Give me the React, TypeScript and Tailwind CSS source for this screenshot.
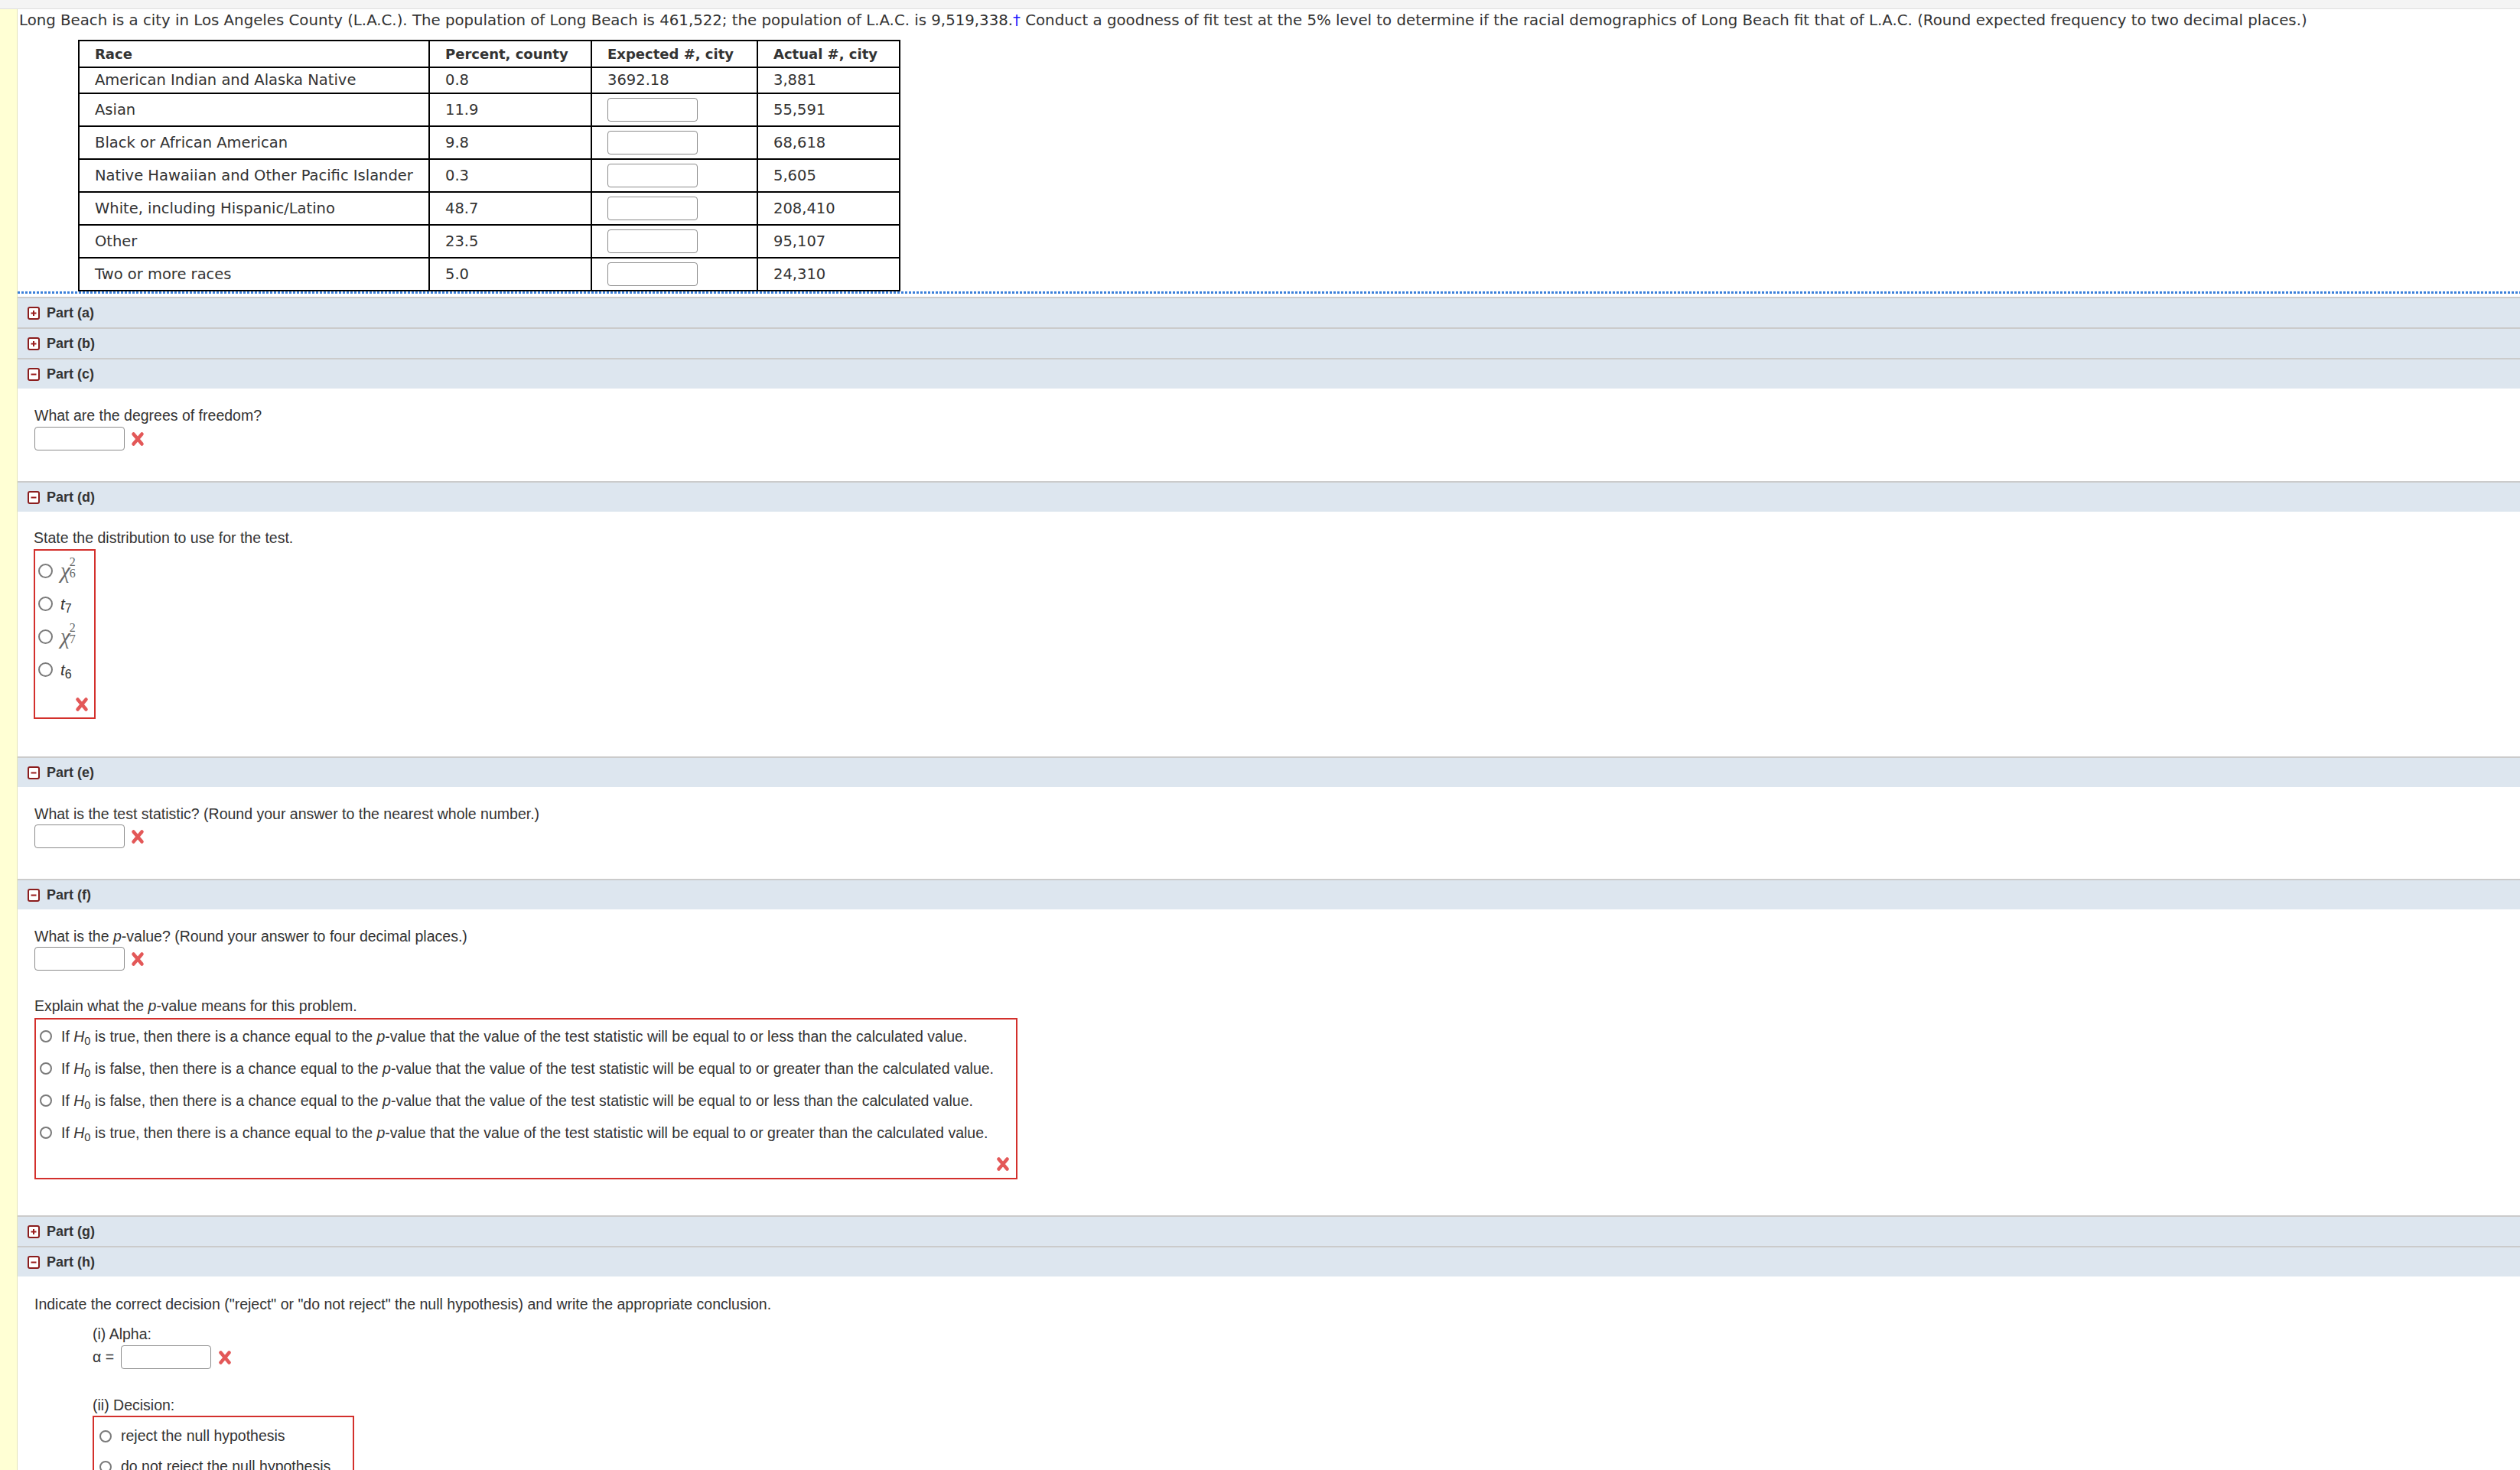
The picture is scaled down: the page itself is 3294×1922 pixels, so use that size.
import React from "react";

const verdana = "font-['DejaVu_Sans',Verdana,sans-serif]";
const arial = "font-['Liberation_Sans',Arial,sans-serif]";

const rows: [string, string, string | null, string][] = [
  ["American Indian and Alaska Native", "0.8", "3692.18", "3,881"],
  ["Asian", "11.9", null, "55,591"],
  ["Black or African American", "9.8", null, "68,618"],
  ["Native Hawaiian and Other Pacific Islander", "0.3", null, "5,605"],
  ["White, including Hispanic/Latino", "48.7", null, "208,410"],
  ["Other", "23.5", null, "95,107"],
  ["Two or more races", "5.0", null, "24,310"],
];

const Toggle = ({ open }: { open: boolean }) => (
  <svg width="16" height="17" viewBox="0 0 16 17" className="shrink-0">
    <rect x="1" y="1" width="14" height="15" rx="2" fill="#fff" stroke="#8b1d1d" strokeWidth="2" />
    <path d="M4.5 8.5h7" stroke="#9b1c1c" strokeWidth="2" />
    {!open && <path d="M8 5v7" stroke="#9b1c1c" strokeWidth="2" />}
  </svg>
);

const Cross = () => (
  <svg width="20" height="20" viewBox="0 0 20 20" className="shrink-0">
    <path d="M4.5 3.5 15.5 16.5M15.5 3.5 4.5 16.5" stroke="#e35858" strokeWidth="4.5" strokeLinecap="round" />
  </svg>
);

const Radio = ({ big }: { big?: boolean }) =>
  big ? (
    <span className="w-[19px] h-[19px] rounded-full border-2 border-[#7a7a7a] bg-white shrink-0" />
  ) : (
    <span className="w-[16px] h-[16px] rounded-full border-2 border-[#7a7a7a] bg-white shrink-0" />
  );

const Box = () => (
  <input type="text" readOnly className="w-[118px] h-[31px] border border-[#8c8c8c] rounded-[4px] bg-white" />
);

const PartHeader = ({ label, open }: { label: string; open: boolean }) => (
  <div className="h-[40px] border-t-2 border-[#cbcbcb] bg-[#dde6ef] flex items-center pl-[13px] gap-[9px]">
    <Toggle open={open} />
    <span className={`${arial} font-bold text-[18px] text-[#333]`}>Part ({label})</span>
  </div>
);

const Chi = ({ n }: { n: string }) => (
  <span className="inline-flex items-center font-['Liberation_Serif',serif] text-[#666]">
    <span className="italic text-[29px] leading-none">χ</span>
    <span className="inline-flex flex-col text-[16px] leading-[15px] -ml-[1px] -mt-[10px]">
      <span>2</span>
      <span>{n}</span>
    </span>
  </span>
);

const T = ({ n }: { n: string }) => (
  <span className={`${arial} text-[21px] text-[#333]`}>
    <span className="italic">t</span>
    <sub className="text-[16px]">{n}</sub>
  </span>
);

const H0 = () => (
  <>
    <i>H</i>
    <sub>0</sub>
  </>
);

const pOptions = [
  ["true", "less"],
  ["false", "greater"],
  ["false", "less"],
  ["true", "greater"],
];

const th = "border-2 border-black px-[20px] text-left font-bold text-[18px] whitespace-nowrap";
const td = "border-2 border-black px-[20px] whitespace-nowrap";

export default function App() {
  return (
    <div className="min-h-screen bg-white flex flex-col">
      <div className="h-[12px] bg-[#f4f4f4] border-b border-[#dedede]" />
      <div className="flex flex-1">
        <div className="w-[23px] shrink-0 bg-[#ffffd4] border-r border-[#e4e4b8]" />
        <div className="flex-1 min-w-0">
          <p className={`${verdana} text-[19.75px] leading-[26px] text-[#333] pt-[2px] pl-[2px] whitespace-nowrap`}>
            Long Beach is a city in Los Angeles County (L.A.C.). The population of Long Beach is 461,522; the
            population of L.A.C. is 9,519,338.<span className="text-[#1a1aff]">†</span> Conduct a goodness of fit test at the 5% level to
            determine if the racial demographics of Long Beach fit that of L.A.C. (Round expected frequency to two
            decimal places.)
          </p>

          <table className={`${verdana} mt-[12px] ml-[79px] w-[1073px] table-fixed border-collapse border-2 border-black text-[19.5px] text-[#333]`}>
            <thead>
              <tr className="h-[35px]">
                <th className={`w-[458px] ${th}`}>Race</th>
                <th className={`w-[212px] ${th}`}>Percent, county</th>
                <th className={`w-[217px] ${th}`}>Expected #, city</th>
                <th className={`w-[186px] ${th}`}>Actual #, city</th>
              </tr>
            </thead>
            <tbody>
              {rows.map((r, i) => (
                <tr key={r[0]} className={i === 0 ? "h-[34px]" : "h-[43px]"}>
                  <td className={td}>{r[0]}</td>
                  <td className={td}>{r[1]}</td>
                  <td className={td}>
                    {r[2] ? r[2] : <div className="flex items-center"><Box /></div>}
                  </td>
                  <td className={td}>{r[3]}</td>
                </tr>
              ))}
            </tbody>
          </table>

          <div className="h-[3px] bg-[repeating-linear-gradient(90deg,#3b7fd9_0px,#3b7fd9_3px,transparent_3px,transparent_5px)]" />
          <div className="h-[4px]" />

          <div className={`${arial} text-[19.5px] text-[#333]`}>
            <PartHeader label="a" open={false} />
            <PartHeader label="b" open={false} />
            <PartHeader label="c" open />
            <div className="pl-[22px] pt-[24px] pb-[40px]">
              <p className="leading-[22px]">What are the degrees of freedom?</p>
              <div className="mt-[4px] flex items-center gap-[7px]">
                <Box />
                <Cross />
              </div>
            </div>

            <PartHeader label="d" open />
            <div className="pl-[21px] pt-[23px] pb-[49px]">
              <p className="leading-[22px]">State the distribution to use for the test.</p>
              <div className="mt-[4px] w-[81px] border-2 border-[#d3302c] pt-[5px] pb-[7px] pl-[4px] pr-[6px] flex flex-col">
                <div className="h-[43px] flex items-center gap-[10px]"><Radio big /><Chi n="6" /></div>
                <div className="h-[43px] flex items-center gap-[10px]"><Radio big /><T n="7" /></div>
                <div className="h-[43px] flex items-center gap-[10px]"><Radio big /><Chi n="7" /></div>
                <div className="h-[43px] flex items-center gap-[10px]"><Radio big /><T n="6" /></div>
                <div className="mt-[14px] flex justify-end"><Cross /></div>
              </div>
            </div>

            <PartHeader label="e" open />
            <div className="pl-[22px] pt-[24px] pb-[40px]">
              <p className="leading-[22px]">What is the test statistic? (Round your answer to the nearest whole number.)</p>
              <div className="mt-[3px] flex items-center gap-[7px]">
                <Box />
                <Cross />
              </div>
            </div>

            <PartHeader label="f" open />
            <div className="pl-[22px] pt-[24px] pb-[47px]">
              <p className="leading-[22px]">
                What is the <i>p</i>-value? (Round your answer to four decimal places.)
              </p>
              <div className="mt-[3px] flex items-center gap-[7px]">
                <Box />
                <Cross />
              </div>
              <p className="mt-[35px] leading-[22px]">
                Explain what the <i>p</i>-value means for this problem.
              </p>
              <div className="mt-[5px] w-[1285px] border-2 border-[#d3302c] pt-[1px] pb-[8px] pl-[5px] pr-[7px] flex flex-col">
                {pOptions.map(([h, dir], i) => (
                  <div key={i} className="h-[42px] flex items-center gap-[12px]">
                    <Radio />
                    <span className="whitespace-nowrap leading-[22px]">
                      If <H0 /> is {h}, then there is a chance equal to the <i>p</i>-value that the value of the test
                      statistic will be equal to or {dir} than the calculated value.
                    </span>
                  </div>
                ))}
                <div className="mt-[10px] flex justify-end"><Cross /></div>
              </div>
            </div>

            <PartHeader label="g" open={false} />
            <PartHeader label="h" open />
            <div className="pl-[22px] pt-[25px] pb-[40px]">
              <p className="leading-[22px]">
                Indicate the correct decision ("reject" or "do not reject" the null hypothesis) and write the
                appropriate conclusion.
              </p>
              <div className="pl-[76px]">
                <p className="mt-[17px] leading-[22px]">(i) Alpha:</p>
                <div className="mt-[4px] flex items-center">
                  <span className="w-[37px]">α =</span>
                  <Box />
                  <span className="ml-[8px]"><Cross /></span>
                </div>
                <p className="mt-[36px] leading-[22px]">(ii) Decision:</p>
                <div className="mt-[3px] w-[342px] border-2 border-[#d3302c] pt-[5px] pb-[8px] pl-[7px] pr-[7px] flex flex-col">
                  <div className="h-[40px] flex items-center gap-[12px]"><Radio /><span>reject the null hypothesis</span></div>
                  <div className="h-[40px] flex items-center gap-[12px]"><Radio /><span>do not reject the null hypothesis</span></div>
                  <div className="mt-[10px] flex justify-end"><Cross /></div>
                </div>
              </div>
            </div>
          </div>
        </div>
      </div>
    </div>
  );
}
